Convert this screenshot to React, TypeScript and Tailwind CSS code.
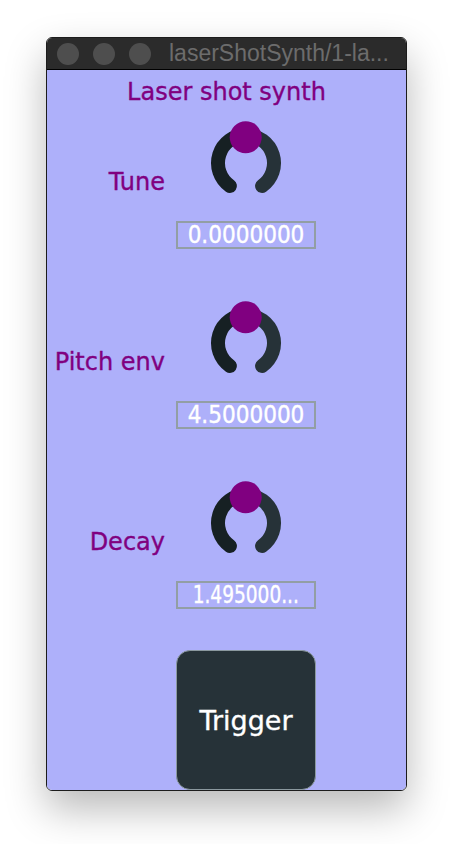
const params = [
  { name: 'Tune', value: '0.0000000', squeeze: '' },
  { name: 'Pitch env', value: '4.5000000', squeeze: '' },
  { name: 'Decay', value: '1.495000...', squeeze: 'scale-x-[0.86]' },
];

const sans = "font-['DejaVu_Sans',Verdana,sans-serif] [-webkit-text-stroke:0.35px_currentColor]";
const condensed =
  "font-['DejaVu_Sans_Condensed','DejaVu_Sans',sans-serif] [font-stretch:condensed] [-webkit-text-stroke:0.35px_currentColor]";

// rotary knob: filled arc up to the thumb, outline arc for the rest
function Knob() {
  return (
    <svg width="140" height="106" viewBox="0 0 140 106">
      <path
        d="M 53.94 75.94 A 28 28 0 0 1 70 25"
        fill="none"
        stroke="#162023"
        strokeWidth="14"
        strokeLinecap="round"
      />
      <path
        d="M 70 25 A 28 28 0 0 1 86.06 75.94"
        fill="none"
        stroke="#263238"
        strokeWidth="14"
        strokeLinecap="round"
      />
      <circle cx="69.7" cy="27.3" r="16" fill="#800080" />
    </svg>
  );
}

function ParamRow({ name, value, squeeze }: { name: string; value: string; squeeze: string }) {
  return (
    <div className="h-[180px]">
      <div className="flex h-[140px] items-center">
        <div className={`w-[129px] pr-[11px] pt-[3px] text-right text-[24px] leading-none text-[#800080] ${sans}`}>
          {name}
        </div>
        <div className="flex h-[140px] w-[140px] flex-col">
          <Knob />
          <div className="mt-[5px] flex h-[28px] items-center justify-center overflow-hidden border-2 border-[#929ea4]">
            <span className={`whitespace-nowrap text-[24px] leading-none text-white ${condensed} ${squeeze}`}>
              {value}
            </span>
          </div>
        </div>
      </div>
    </div>
  );
}

export default function App() {
  return (
    <div className="h-[844px] w-[452px] bg-white pl-[46px] pt-[37px]">
      <div className="w-[361px] overflow-hidden rounded-[6px] border border-[#1c1c1c] shadow-[0_18px_40px_rgba(0,0,0,0.28)]">
        {/* title bar */}
        <div className="flex h-[32px] items-center border-b border-black bg-[#2b2b2b] pl-[10px]">
          <div className="flex gap-[14px]">
            <span className="h-[22px] w-[22px] rounded-full bg-[#4e4e4e]" />
            <span className="h-[22px] w-[22px] rounded-full bg-[#4e4e4e]" />
            <span className="h-[22px] w-[22px] rounded-full bg-[#4e4e4e]" />
          </div>
          <span className="ml-[18px] whitespace-nowrap font-['Liberation_Sans',Arial,sans-serif] text-[23px] leading-none text-[#6c6c6c]">
            laserShotSynth/1-la...
          </span>
        </div>

        <div className="h-[720px] bg-[#aeb0fa]">
          <div className={`flex h-[40px] items-center justify-center pt-[3px] text-[24px] leading-none text-[#800080] ${sans}`}>
            Laser shot synth
          </div>
          {params.map((p) => (
            <ParamRow key={p.name} {...p} />
          ))}
          <div className="pl-[129px]">
            <button className={`flex h-[140px] w-[140px] items-center justify-center rounded-[14px] border border-[#8b999f] bg-[#263238] text-[27px] leading-none text-white ${sans}`}>
              Trigger
            </button>
          </div>
        </div>
      </div>
    </div>
  );
}
